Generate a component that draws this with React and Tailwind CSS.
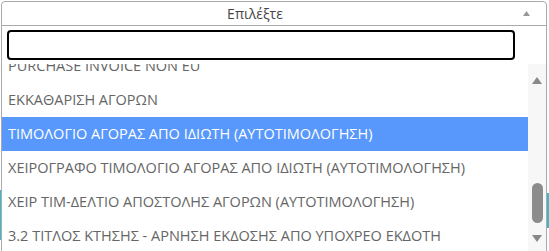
import React from "react";

const items = [
  "PURCHASE INVOICE NON EU",
  "ΕΚΚΑΘΑΡΙΣΗ ΑΓΟΡΩΝ",
  "ΤΙΜΟΛΟΓΙΟ ΑΓΟΡΑΣ ΑΠΟ ΙΔΙΩΤΗ (ΑΥΤΟΤΙΜΟΛΟΓΗΣΗ)",
  "ΧΕΙΡΟΓΡΑΦΟ ΤΙΜΟΛΟΓΙΟ ΑΓΟΡΑΣ ΑΠΟ ΙΔΙΩΤΗ (ΑΥΤΟΤΙΜΟΛΟΓΗΣΗ)",
  "ΧΕΙΡ ΤΙΜ-ΔΕΛΤΙΟ ΑΠΟΣΤΟΛΗΣ ΑΓΟΡΩΝ (ΑΥΤΟΤΙΜΟΛΟΓΗΣΗ)",
  "3.2 ΤΙΤΛΟΣ ΚΤΗΣΗΣ - ΑΡΝΗΣΗ ΕΚΔΟΣΗΣ ΑΠΟ ΥΠΟΧΡΕΟ ΕΚΔΟΤΗ",
  "ΠΑΡΑΣΤΑΤΙΚΟ ΑΓΟΡΑΣ",
];

export default function App() {
  return (
    <div
      className="w-[549px] h-[251px] overflow-hidden bg-white flex"
      style={{ fontFamily: '"Open Sans", "Noto Sans", sans-serif' }}
    >
      {/* left edge of page behind */}
      <div className="w-[1px] flex flex-col">
        <div className="h-[190px]" />
        <div className="h-[50px] bg-[#3bb8c9]" />
      </div>

      <div className="w-[546px] h-[260px] mt-[1px] border border-[#aaa] rounded-t-[4px] flex flex-col">
        {/* header */}
        <div className="h-[24px] shrink-0 flex items-center border-b border-[#aaa]">
          <span className="flex-1 text-center text-[14px] text-[#444] leading-none pl-[2px]">
            Επιλέξτε
          </span>
          <div className="w-[40px] flex justify-center">
            <svg width="7" height="5" viewBox="0 0 7 5">
              <path d="M0 5 L3.5 0 L7 5 Z" fill="#999" />
            </svg>
          </div>
        </div>

        {/* search */}
        <div className="shrink-0 pt-[4px] pb-[4px] px-[5px]">
          <input
            className="block w-[508px] h-[30px] border-2 border-black rounded-[4px] outline-none"
            type="text"
          />
        </div>

        {/* list */}
        <div className="flex flex-1 min-h-0">
          <div className="flex-1 overflow-hidden">
            <div className="mt-[-15px]">
              {items.map((t, i) => (
                <div
                  key={t}
                  className={
                    "h-[34px] flex items-center pl-[6px] text-[14.5px] whitespace-nowrap " +
                    (i === 2 ? "bg-[#5897fb] text-white" : "text-[#666]")
                  }
                >
                  {t}
                </div>
              ))}
            </div>
          </div>

          {/* scrollbar */}
          <div className="w-[18px] bg-[#f7f7f7] flex flex-col items-center">
            <svg className="mt-[13px]" width="10" height="7" viewBox="0 0 10 7">
              <path d="M0 7 L5 0 L10 7 Z" fill="#888" />
            </svg>
            <div className="h-[99px]" />
            <div className="w-[11px] h-[40px] rounded-full bg-[#8c8c8c]" />
            <svg className="mt-[12px]" width="10" height="7" viewBox="0 0 10 7">
              <path d="M0 0 L5 7 L10 0 Z" fill="#888" />
            </svg>
          </div>
        </div>
      </div>

      {/* right edge of page behind */}
      <div className="w-[2px] flex flex-col">
        <div className="h-[193px]" />
        <div className="h-[35px] bg-[#3bb8c9]" />
      </div>
    </div>
  );
}
